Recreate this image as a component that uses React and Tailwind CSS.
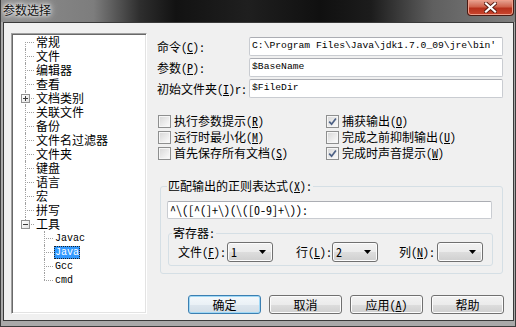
import React from 'react';

const cjk = "font-['Noto_Sans_Mono_CJK_SC','Noto_Sans_CJK_SC',sans-serif] text-[12px]";
const mono = "font-['Liberation_Mono','Noto_Sans_Mono_CJK_SC',monospace]";

const topItems = [
  { label: '常规' },
  { label: '文件' },
  { label: '编辑器' },
  { label: '查看' },
  { label: '文档类别', expander: 'plus' },
  { label: '关联文件' },
  { label: '备份' },
  { label: '文件名过滤器' },
  { label: '文件夹' },
  { label: '键盘' },
  { label: '语言' },
  { label: '宏' },
  { label: '拼写' },
  { label: '工具', expander: 'minus' },
];

const toolItems = ['Javac', 'Java', 'Gcc', 'cmd'];

function Expander({ kind }) {
  return (
    <span className="absolute left-[9px] top-[3px] w-[9px] h-[9px] border border-[#919191] bg-[linear-gradient(135deg,#ffffff,#e3e3e3)] flex items-center justify-center">
      <svg width="7" height="7" viewBox="0 0 7 7">
        <path d="M1 3.5 H6" stroke="#3a3a3a" strokeWidth="1" />
        {kind === 'plus' && <path d="M3.5 1 V6" stroke="#3a3a3a" strokeWidth="1" />}
      </svg>
    </span>
  );
}

function TopRow({ item, first, last }) {
  return (
    <div className="flex h-[14px] items-center">
      <div className="relative w-[23px] h-[14px] shrink-0">
        <span
          className={
            first
              ? 'absolute left-[13px] top-[7px] bottom-0 border-l border-dotted border-[#a0a0a0]'
              : last
              ? 'absolute left-[13px] top-0 bottom-[7px] border-l border-dotted border-[#a0a0a0]'
              : 'absolute left-[13px] top-0 bottom-0 border-l border-dotted border-[#a0a0a0]'
          }
        />
        <span className="absolute left-[13px] top-[7px] w-[9px] border-t border-dotted border-[#a0a0a0]" />
        {item.expander && <Expander kind={item.expander} />}
      </div>
      <span className={`${cjk} leading-[14px] px-[1px] text-black`}>{item.label}</span>
    </div>
  );
}

function ChildRow({ label, last }) {
  const selected = label === 'Java';
  return (
    <div className="flex h-[14px] items-center">
      <div className="relative w-[42px] h-[14px] shrink-0">
        <span
          className={
            last
              ? 'absolute left-[32px] top-0 bottom-[7px] border-l border-dotted border-[#a0a0a0]'
              : 'absolute left-[32px] top-0 bottom-0 border-l border-dotted border-[#a0a0a0]'
          }
        />
        <span className="absolute left-[32px] top-[7px] w-[9px] border-t border-dotted border-[#a0a0a0]" />
      </div>
      <span
        className={
          selected
            ? `${mono} text-[10px] leading-[13px] h-[13px] px-[1px] bg-[#3399ff] text-white outline-1 outline-dotted outline-[#222] -outline-offset-1`
            : `${mono} text-[10px] leading-[13px] h-[13px] px-[1px] text-black`
        }
      >
        {label}
      </span>
    </div>
  );
}

function Acc({ children }) {
  return <span className="underline underline-offset-[1px]">{children}</span>;
}

function Field({ label, value }) {
  return (
    <div className="flex items-center h-[19px]">
      <div className={`${cjk} w-[92px] leading-[14px] whitespace-nowrap`}>{label}</div>
      <div className="w-[254px] h-[19px] border border-[#c9ccd1] border-t-[#abadb3] rounded-[2px] bg-white flex items-center overflow-hidden pl-[2px]">
        <span className={`${mono} text-[9.7px] whitespace-nowrap text-black`}>{value}</span>
      </div>
    </div>
  );
}

function Check({ checked, children }) {
  return (
    <div className="flex items-center h-[16px] gap-[3px]">
      <span className="w-[13px] h-[13px] ml-[1px] shrink-0 border border-[#8e8f8f] bg-[linear-gradient(135deg,#d6d6d6,#fdfdfd)] shadow-[inset_0_0_0_1px_#f6f6f6] flex items-center justify-center">
        {checked && (
          <svg width="9" height="9" viewBox="0 0 9 9">
            <path d="M1.2 4.6 L3.6 7.2 L7.9 1.4" fill="none" stroke="#4d6185" strokeWidth="1.7" />
          </svg>
        )}
      </span>
      <span className={`${cjk} leading-[14px] whitespace-nowrap`}>{children}</span>
    </div>
  );
}

function Select({ value }) {
  return (
    <div className="w-[46px] h-[20px] border border-[#707070] rounded-[3px] bg-[linear-gradient(to_bottom,#f2f2f2_0%,#ebebeb_50%,#dddddd_51%,#cfcfcf_100%)] shadow-[inset_0_0_0_1px_#fcfcfc] flex items-center justify-between pl-[3px] pr-[6px]">
      <span className={`${cjk} leading-[14px]`}>{value}</span>
      <svg width="7" height="4" viewBox="0 0 7 4">
        <path d="M0 0 H7 L3.5 4 Z" fill="#000" />
      </svg>
    </div>
  );
}

function Button({ children, primary }) {
  return (
    <button
      className={
        primary
          ? `${cjk} w-[73px] h-[19px] leading-[14px] rounded-[3px] border border-[#3c7fb1] bg-[linear-gradient(to_bottom,#f4f8fb_0%,#eaf1f6_50%,#dde6ee_51%,#d2dde6_100%)] shadow-[inset_0_0_0_1px_#9fd8f6] text-black`
          : `${cjk} w-[73px] h-[19px] leading-[14px] rounded-[3px] border border-[#707070] bg-[linear-gradient(to_bottom,#f2f2f2_0%,#ebebeb_50%,#dddddd_51%,#cfcfcf_100%)] shadow-[inset_0_0_0_1px_#fcfcfc] text-black`
      }
    >
      {children}
    </button>
  );
}

export default function App() {
  return (
    <div className="w-[516px] h-[327px] flex flex-col overflow-hidden border-x border-b border-[#3c3c3c] bg-[#a9a9a9] text-black">
      {/* title bar */}
      <div className="h-[22px] shrink-0 flex items-start bg-[linear-gradient(to_right,#8d8d8d_0%,#7d7d7d_18%,#2e2e2e_27%,#121212_34%,#1f1f1f_48%,#101010_62%,#1c1c1c_72%,#5f5f5f_84%,#7f7f7f_100%)]">
        <span className={`${cjk} leading-[14px] pl-[2px] pt-[3px] text-[#111] [text-shadow:0_0_6px_#fff,0_0_3px_#fff,0_0_10px_#ddd]`}>
          参数选择
        </span>
        <div className="ml-auto mr-[1px] w-[47px] h-[16px] rounded-b-[4px] border border-t-0 border-[#4a1a12] bg-[linear-gradient(to_bottom,#e7a493_0%,#d0634d_45%,#b7311c_55%,#c9462f_100%)] shadow-[inset_0_0_0_1px_#ee9d8a] flex items-center justify-center">
          <svg width="13" height="11" viewBox="0 0 13 11">
            <path d="M2 1.5 L11 9.5 M11 1.5 L2 9.5" stroke="#5a1c12" strokeWidth="4" strokeLinecap="square" />
            <path d="M2 1.5 L11 9.5 M11 1.5 L2 9.5" stroke="#ffffff" strokeWidth="2.2" strokeLinecap="square" />
          </svg>
        </div>
      </div>

      {/* dialog body */}
      <div className="flex-1 ml-[2px] mr-[1px] mb-[5px] border border-[#3a3a3a] bg-[#f0f0f0] flex">
        {/* tree */}
        <div className="ml-[7px] mt-[10px] w-[136px] h-[281px] shrink-0 bg-white border border-t-[#a0a0a0] border-l-[#a0a0a0] border-r-white border-b-white shadow-[inset_1px_1px_0_#696969,inset_-1px_-1px_0_#e3e3e3] pt-[1px]">
          {topItems.map((item, i) => (
            <TopRow key={item.label} item={item} first={i === 0} last={i === topItems.length - 1} />
          ))}
          {toolItems.map((label, i) => (
            <ChildRow key={label} label={label} last={i === toolItems.length - 1} />
          ))}
        </div>

        {/* settings */}
        <div className="ml-[10px] pt-[14px] flex flex-col">
          <div className="flex flex-col gap-[2px]">
            <Field label={<>命令(<Acc>C</Acc>):</>} value={"C:\\Program Files\\Java\\jdk1.7.0_09\\jre\\bin'"} />
            <Field label={<>参数(<Acc>P</Acc>):</>} value="$BaseName" />
            <Field label={<>初始文件夹(<Acc>I</Acc>)r:</>} value="$FileDir" />
          </div>

          <div className="mt-[15px] grid grid-cols-[168px_1fr]">
            <Check>执行参数提示(<Acc>R</Acc>)</Check>
            <Check checked>捕获输出(<Acc>O</Acc>)</Check>
            <Check>运行时最小化(<Acc>M</Acc>)</Check>
            <Check>完成之前抑制输出(<Acc>U</Acc>)</Check>
            <Check>首先保存所有文档(<Acc>S</Acc>)</Check>
            <Check checked>完成时声音提示(<Acc>W</Acc>)</Check>
          </div>

          <fieldset className="mt-[18px] ml-[3px] w-[343px] border border-[#d5dfe5] rounded-[3px] px-[6px] pt-[8px] pb-[7px]">
            <legend className={`${cjk} leading-[14px] px-[1px]`}>匹配输出的正则表达式(<Acc>X</Acc>):</legend>
            <div className="w-[325px] h-[18px] border border-[#c9ccd1] border-t-[#abadb3] rounded-[2px] bg-white flex items-center pl-[2px]">
              <span className={`${cjk} leading-[14px] whitespace-nowrap`}>{'^\\([^(]+\\)(\\([0-9]+\\)):'}</span>
            </div>

            <fieldset className="mt-[7px] ml-[1px] w-[325px] border border-[#d5dfe5] rounded-[3px] px-[3px] pt-[2px] pb-[3px]">
              <legend className={`${cjk} leading-[14px] px-[1px]`}>寄存器:</legend>
              <div className="flex items-center h-[20px] pl-[6px]">
                <span className={`${cjk} leading-[14px] whitespace-nowrap w-[49px]`}>文件(<Acc>F</Acc>):</span>
                <Select value="1" />
                <span className={`${cjk} leading-[14px] whitespace-nowrap ml-[23px] w-[36px]`}>行(<Acc>L</Acc>):</span>
                <Select value="2" />
                <span className={`${cjk} leading-[14px] whitespace-nowrap ml-[21px] w-[38px]`}>列(<Acc>N</Acc>):</span>
                <Select value="" />
              </div>
            </fieldset>
          </fieldset>

          <div className="mt-[21px] ml-[31px] flex gap-[8px]">
            <Button primary>确定</Button>
            <Button>取消</Button>
            <Button>应用(<Acc>A</Acc>)</Button>
            <Button>帮助</Button>
          </div>
        </div>
      </div>
    </div>
  );
}
